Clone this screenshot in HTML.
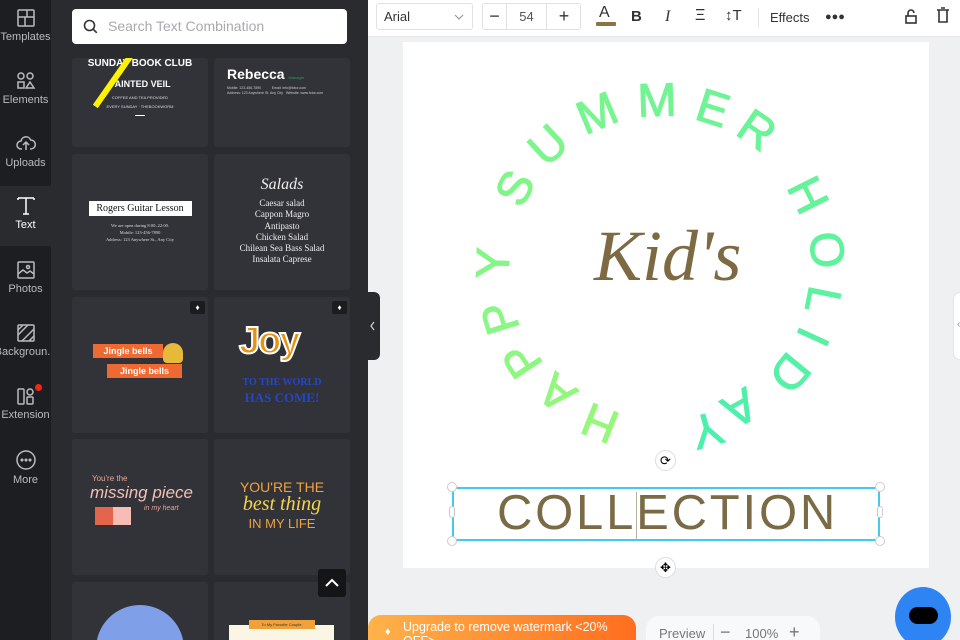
<!DOCTYPE html>
<html style="overflow:hidden;width:960px;height:640px"><head><meta charset="utf-8"><style>
*{box-sizing:border-box;margin:0;padding:0}
body{width:960px;height:640px;overflow:hidden;position:relative;font-family:"Liberation Sans",sans-serif;background:#eef0f2}
#wrap{position:absolute;left:0;top:0;width:960px;height:640px;overflow:hidden}
.nav{position:absolute;left:0;top:0;width:51px;height:640px;background:#1d1e22;overflow:hidden}
.ni{position:absolute;left:0;width:51px;height:60px;color:#b9bbc0;font-size:11px;text-align:center}
.ni svg{display:block;margin:8px auto 3px}
.ni span{display:block;white-space:nowrap;margin-left:-10px;width:71px}
.panel{position:absolute;left:51px;top:0;width:317px;height:640px;background:#2a2b2f;overflow:hidden}
.card{position:absolute;width:136px;height:136px;background:#323338;border-radius:3px;overflow:hidden;color:#fff;text-align:center}
.search{position:absolute;left:21px;top:9px;width:275px;height:35px;background:#fff;border-radius:4px;color:#a8aab0;font-size:14px;line-height:35px;padding-left:36px}
.tb{position:absolute;left:368px;top:0;width:592px;height:37px;background:#fff;border-bottom:1px solid #e4e6e9;color:#333;font-size:13px}
.canvas{position:absolute;left:403px;top:42px;width:526px;height:526px;background:#fff}
.l{position:absolute;font-size:47px;width:50px;height:50px;line-height:50px;text-align:center;margin:-25px 0 0 -25px;-webkit-text-stroke:1px currentColor}
.h{position:absolute;width:10px;height:10px;border-radius:50%;background:#fff;border:1px solid #ccc}
</style></head><body><div id="wrap">
<div class="nav">
 <div class="ni" style="top:0"><svg width="20" height="20" viewBox="0 0 20 20" fill="none" stroke="#b9bbc0" stroke-width="1.5"><rect x="2" y="2" width="16" height="16" rx="1"/><path d="M2 9h16M9 9v9M11 2v7"/></svg><span>Templates</span></div>
 <div class="ni" style="top:63px"><svg width="20" height="20" viewBox="0 0 20 20" fill="none" stroke="#b9bbc0" stroke-width="1.5"><circle cx="5" cy="5" r="3"/><circle cx="14" cy="5" r="3"/><rect x="2" y="11" width="6" height="6"/><path d="M14 11l4 6h-8z"/></svg><span>Elements</span></div>
 <div class="ni" style="top:126px"><svg width="20" height="20" viewBox="0 0 20 20" fill="none" stroke="#b9bbc0" stroke-width="1.5"><path d="M6 15H5a4 4 0 010-8 5 5 0 019.6-1A4 4 0 0115 15h-1M10 16V9M7 11l3-3 3 3"/></svg><span>Uploads</span></div>
 <div class="ni" style="top:186px;background:#2a2b2f;color:#fff;height:60px"><svg width="22" height="22" viewBox="0 0 22 22" fill="none" stroke="#fff" stroke-width="1.5"><path d="M3 4h16M11 4v16M3 4v2M19 4v2M8 20h6"/></svg><span>Text</span></div>
 <div class="ni" style="top:252px"><svg width="20" height="20" viewBox="0 0 20 20" fill="none" stroke="#b9bbc0" stroke-width="1.5"><rect x="2" y="2" width="16" height="16" rx="1"/><path d="M2 14l5-4 4 3 3-2 4 3"/><circle cx="12" cy="7" r="1.5"/></svg><span>Photos</span></div>
 <div class="ni" style="top:315px"><svg width="20" height="20" viewBox="0 0 20 20" fill="none" stroke="#b9bbc0" stroke-width="1.5"><rect x="2" y="2" width="16" height="16" rx="1"/><path d="M2 12L12 2M6 18L18 6M2 7l5-5M13 18l5-5"/></svg><span>Backgroun...</span></div>
 <div class="ni" style="top:378px"><svg width="20" height="20" viewBox="0 0 20 20" fill="none" stroke="#b9bbc0" stroke-width="1.5"><rect x="2" y="3" width="6" height="15" rx="1"/><circle cx="14" cy="6" r="3"/><rect x="11" y="11" width="6" height="7" rx="1"/></svg><span>Extension</span><i style="position:absolute;left:35px;top:6px;width:7px;height:7px;border-radius:50%;background:#f21"></i></div>
 <div class="ni" style="top:441px"><svg width="22" height="22" viewBox="0 0 22 22" fill="none" stroke="#b9bbc0" stroke-width="1.5"><circle cx="11" cy="11" r="9"/><circle cx="7" cy="11" r=".8" fill="#b9bbc0"/><circle cx="11" cy="11" r=".8" fill="#b9bbc0"/><circle cx="15" cy="11" r=".8" fill="#b9bbc0"/></svg><span>More</span></div>
</div>
<div class="panel">
 <div class="card" style="left:21px;top:58px;height:89px">
  <div style="font-weight:bold;font-size:10px;margin-top:0">SUNDAY BOOK CLUB</div>
  <div style="font-weight:bold;font-size:9px;margin-top:10px">PAINTED VEIL</div>
  <div style="font-size:4px;margin-top:6px;color:#ddd">COFFEE AND TEA PROVIDED</div>
  <div style="font-size:4px;margin-top:4px;color:#ddd">EVERY SUNDAY · THEBOOKWORM</div>
  <div style="width:10px;height:1px;background:#fff;margin:6px auto"></div>
  <div style="position:absolute;left:57px;top:-4px;width:6px;height:64px;background:#fff200;transform:rotate(35deg);transform-origin:top"></div>
 </div>
 <div class="card" style="left:163px;top:58px;height:89px;text-align:left">
  <div style="font-weight:bold;font-size:14px;margin:8px 0 0 13px">Rebecca <span style="font-size:4px;color:#2a9c6a;font-weight:normal">Manager</span></div>
  <div style="font-size:3.5px;margin:4px 0 0 13px;color:#ccc;line-height:5px">Mobile: 123-456-7890 &nbsp; &nbsp; &nbsp; &nbsp; &nbsp; Email: info@fotor.com<br>Address: 123 Anywhere St. Any City &nbsp; Website: www.fotor.com</div>
 </div>
 <div class="card" style="left:21px;top:154px">
  <div style="background:#fff;color:#111;font-family:'Liberation Serif',serif;font-size:10px;width:103px;margin:47px auto 0;padding:2px 0">Rogers Guitar Lesson</div>
  <div style="font-family:'Liberation Serif',serif;font-size:4.5px;line-height:7px;margin-top:6px;color:#ddd">We are open during 8:00–22:00.<br>Mobile: 123-456-7890<br>Address: 123 Anywhere St., Any City</div>
 </div>
 <div class="card" style="left:163px;top:154px;font-family:'Liberation Serif',serif;color:#eee">
  <div style="font-style:italic;font-size:16px;margin-top:22px">Salads</div>
  <div style="font-size:9px;line-height:11.3px;margin-top:4px">Caesar salad<br>Cappon Magro<br>Antipasto<br>Chicken Salad<br>Chilean Sea Bass Salad<br>Insalata Caprese</div>
 </div>
 <div class="card" style="left:21px;top:297px">
  <div style="position:absolute;right:3px;top:4px;width:15px;height:13px;background:#1c1c1f;border-radius:2px;font-size:8px;line-height:13px">♦</div>
  <div style="position:absolute;left:21px;top:47px;width:70px;height:14px;background:#ef6a33;color:#fff;font-size:9px;font-weight:bold;line-height:14px">Jingle bells</div>
  <div style="position:absolute;left:35px;top:67px;width:75px;height:14px;background:#ef6a33;color:#fff;font-size:9px;font-weight:bold;line-height:14px">Jingle bells</div>
  <div style="position:absolute;left:91px;top:46px;width:20px;height:20px;background:#e6b93a;border-radius:50% 50% 4px 4px"></div>
 </div>
 <div class="card" style="left:163px;top:297px">
  <div style="position:absolute;right:3px;top:4px;width:15px;height:13px;background:#1c1c1f;border-radius:2px;font-size:8px;line-height:13px">♦</div>
  <div style="position:absolute;left:25px;top:23px;font-family:'Liberation Sans';font-weight:bold;font-size:38px;color:#e49314;-webkit-text-stroke:2px #fff;letter-spacing:-2px">Joy</div>
  <div style="position:absolute;left:0;width:136px;top:80px;font-family:'Liberation Serif';font-weight:bold;font-size:10px;color:#2446c8">TO THE WORLD</div>
  <div style="position:absolute;left:0;width:136px;top:93px;font-family:'Liberation Serif';font-weight:bold;font-size:13px;color:#2446c8">HAS COME!</div>
 </div>
 <div class="card" style="left:21px;top:439px">
  <div style="position:absolute;left:20px;top:35px;font-size:8px;color:#e8a49a">You're the</div>
  <div style="position:absolute;left:18px;top:44px;font-size:17px;color:#f4c0b6;font-style:italic">missing piece</div>
  <div style="position:absolute;left:72px;top:66px;font-size:7px;color:#e8a49a;font-style:italic">in my heart</div>
  <div style="position:absolute;left:23px;top:68px;width:18px;height:18px;background:#e2654c"></div>
  <div style="position:absolute;left:41px;top:68px;width:18px;height:18px;background:#f7bcb3"></div>
 </div>
 <div class="card" style="left:163px;top:439px">
  <div style="margin-top:40px;font-size:14px;color:#f0a240">YOU'RE THE</div>
  <div style="font-size:20px;color:#f6d54a;font-style:italic;font-family:'Liberation Serif';margin-top:-2px">best thing</div>
  <div style="font-size:13px;color:#f0a240">IN MY LIFE</div>
 </div>
 <div class="card" style="left:21px;top:582px"><div style="position:absolute;left:24px;top:23px;width:88px;height:88px;border-radius:50%;background:#7f9fe8"></div></div>
 <div class="card" style="left:163px;top:582px"><div style="position:absolute;left:15px;top:43px;width:105px;height:40px;background:#fbf6e3"></div><div style="position:absolute;left:35px;top:38px;width:66px;height:9px;background:#f0a13a;font-size:4px;line-height:9px;color:#333">To My Favorite Couple.</div></div>
 <div style="position:absolute;left:267px;top:569px;width:28px;height:28px;background:#151518;border-radius:3px"><svg width="28" height="28" viewBox="0 0 28 28"><path d="M8 17l6-6 6 6" fill="none" stroke="#fff" stroke-width="2"/></svg></div>
 <div class="search"><svg style="position:absolute;left:11px;top:10px" width="15" height="15" viewBox="0 0 15 15" fill="none" stroke="#333" stroke-width="1.6"><circle cx="6.5" cy="6.5" r="5"/><path d="M10.3 10.3l3.5 3.5"/></svg>Search Text Combination</div>
</div>
<div style="position:absolute;left:365px;top:292px;width:15px;height:68px;background:#2a2b2f;border-radius:0 6px 6px 0"><svg width="15" height="68"><path d="M9 30l-3 4 3 4" fill="none" stroke="#ccc" stroke-width="1.3"/></svg></div>
<div class="tb">
 <div style="position:absolute;left:8px;top:3px;width:97px;height:27px;border:1px solid #dfe1e5;border-radius:3px;line-height:25px;padding-left:7px">Arial<svg style="position:absolute;right:8px;top:9px" width="10" height="8"><path d="M1 2l4 4 4-4" fill="none" stroke="#999" stroke-width="1.2"/></svg></div>
 <div style="position:absolute;left:114px;top:3px;width:99px;height:27px;border:1px solid #dfe1e5;border-radius:3px;line-height:25px">
  <span style="position:absolute;left:0;width:23px;text-align:center;font-size:18px">−</span>
  <span style="position:absolute;left:23px;width:41px;height:25px;border-left:1px solid #dfe1e5;border-right:1px solid #dfe1e5;text-align:center;color:#555">54</span>
  <span style="position:absolute;left:64px;width:34px;text-align:center;font-size:18px">+</span></div>
 <div style="position:absolute;left:231px;top:4px;font-size:16px">A</div><div style="position:absolute;left:228px;top:22px;width:20px;height:4px;background:#8a7445;border-radius:1px"></div>
 <div style="position:absolute;left:263px;top:8px;font-weight:bold;font-size:15px">B</div>
 <div style="position:absolute;left:297px;top:8px;font-style:italic;font-family:'Liberation Serif';font-size:16px">I</div>
 <div style="position:absolute;left:327px;top:7px;font-size:16px">Ξ</div>
 <div style="position:absolute;left:357px;top:7px;font-size:15px">↕T</div>
 <div style="position:absolute;left:390px;top:8px;width:1px;height:20px;background:#e3e3e3"></div>
 <div style="position:absolute;left:402px;top:10px">Effects</div>
 <div style="position:absolute;left:457px;top:11px;font-size:11px;letter-spacing:0px">●●●</div>
 <svg style="position:absolute;left:536px;top:8px" width="14" height="16" viewBox="0 0 14 16" fill="none" stroke="#333" stroke-width="1.6"><rect x="2" y="8" width="10" height="7"/><path d="M4 8V5a3 3 0 016 0"/></svg>
 <svg style="position:absolute;left:568px;top:7px" width="14" height="16" viewBox="0 0 14 16" fill="none" stroke="#333" stroke-width="1.6"><path d="M1 3h12M5 1h4M3 3v12h8V3"/></svg>
</div>
<div class="canvas"></div>
<div id="ring"></div>
<div style="position:absolute;left:594px;top:215px;font-family:'Liberation Serif',serif;font-style:italic;font-size:72px;color:#7d6a43">Kid's</div>
<div style="position:absolute;left:452px;top:487px;width:428px;height:54px;border:2px solid #43c8ee"></div>
<div style="position:absolute;left:452px;top:486px;width:428px;height:54px;text-align:center;font-size:49px;line-height:54px;letter-spacing:2.8px;color:#7a6a45;padding-left:3px">COLLECTION</div>
<div style="position:absolute;left:636px;top:492px;width:1px;height:48px;background:#b8b19e"></div>
<div class="h" style="left:447px;top:482px"></div><div class="h" style="left:875px;top:482px"></div>
<div class="h" style="left:447px;top:536px"></div><div class="h" style="left:875px;top:536px"></div>
<div class="h" style="left:449px;top:506px;width:6px;height:12px;border-radius:3px"></div><div class="h" style="left:877px;top:506px;width:6px;height:12px;border-radius:3px"></div>
<div style="position:absolute;left:655px;top:450px;width:21px;height:21px;border-radius:50%;background:#fff;border:1px solid #ddd;font-size:13px;text-align:center;line-height:19px">⟳</div>
<div style="position:absolute;left:655px;top:557px;width:21px;height:21px;border-radius:50%;background:#fff;border:1px solid #ddd;font-size:13px;text-align:center;line-height:19px">✥</div>
<div style="position:absolute;left:953px;top:292px;width:20px;height:68px;background:#fff;border-radius:7px 0 0 7px;border:1px solid #e4e4e4"><span style="position:absolute;left:3px;top:26px;font-size:10px;color:#888">‹</span></div>
<div style="position:absolute;left:368px;top:615px;width:268px;height:40px;border-radius:13px;background:linear-gradient(90deg,#ffb24a,#ff6e1e);color:#fff;font-size:12.5px;line-height:14px;padding:5px 0 0 35px">Upgrade to remove watermark &lt;20%<br>OFF&gt;<span style="position:absolute;left:17px;top:10px;font-size:11px">♦</span></div>
<div style="position:absolute;left:646px;top:616px;width:174px;height:40px;border-radius:13px;background:#f8f9fa;color:#777;font-size:13px">
 <span style="position:absolute;left:13px;top:10px">Preview</span><span style="position:absolute;left:67px;top:8px;width:1px;height:18px;background:#ddd"></span>
 <span style="position:absolute;left:74px;top:6px;font-size:18px">−</span><span style="position:absolute;left:99px;top:10px">100%</span><span style="position:absolute;left:143px;top:6px;font-size:18px">+</span></div>
<div style="position:absolute;left:895px;top:587px;width:56px;height:60px;border-radius:50%;background:#2f84f4"><div style="position:absolute;left:14px;top:20px;width:29px;height:17px;border-radius:9px;background:#000"></div></div>
</div>
<script>
var pts=[["H",600,423],["A",557,393],["P",522,360],["P",500,318],["Y",493,263],["S",515,188],["U",548,145],["M",597,113],["M",657,100],["E",713,108],["R",757,130],["H",808,195],["O",827,250],["L",823,300],["I",813,337],["D",790,373],["A",740,408],["Y",707,430]];
var cx=662,cy=268,h="";
pts.forEach(function(p,i){var ang=Math.atan2(p[1]-cx,-(p[2]-cy))*180/Math.PI;var t=i/(pts.length-1);
var r=Math.round(150-t*75),g=Math.round(248-t*8),b=Math.round(122+t*50);
h+='<div class="l" style="left:'+p[1]+'px;top:'+p[2]+'px;color:rgb('+r+','+g+','+b+');transform:rotate('+ang+'deg)">'+p[0]+'</div>';});
document.getElementById('ring').innerHTML=h;
</script>
</body></html>
